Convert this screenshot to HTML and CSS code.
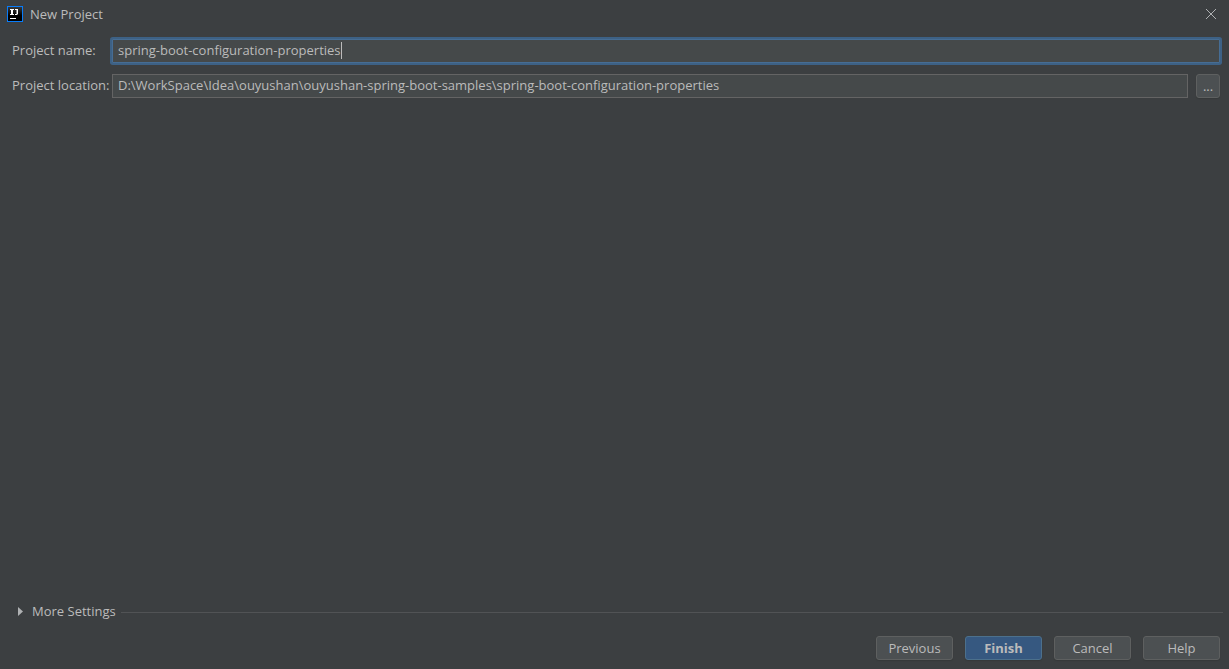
FILE: index.html
```html
<!DOCTYPE html>
<html lang="en">
<head>
  <meta charset="utf-8">
  <title>New Project</title>
  <link rel="stylesheet" href="styles.css">
</head>
<body>
  <!-- Title bar with logo and close button -->
  <header class="title-bar">
    <svg class="logo" viewBox="0 0 16 16" aria-hidden="true">
      <defs>
        <linearGradient id="logoFill" x1="0" y1="0" x2="0" y2="1">
          <stop offset="0" stop-color="#3a3a3a"/>
          <stop offset="0.6" stop-color="#000"/>
        </linearGradient>
      </defs>
      <rect width="16" height="16" fill="#087cfa"/>
      <rect x="1" y="1" width="14" height="14" fill="url(#logoFill)"/>
      <path d="M3 3h4v1H6v4h1v1H3V8h1V4H3zM8 3h3v5l-1 1H8V8h1.500V4H8z" fill="#fff"/>
      <path d="M3 12h6v1H3z" fill="#fff"/>
    </svg>
    <h1>New Project</h1>
    <button class="close" type="button" aria-label="Close">
      <svg viewBox="0 0 10 10" aria-hidden="true">
        <path d="M0 0L10 10M10 0L0 10" stroke="#afb1b3" fill="none"/>
      </svg>
    </button>
  </header>
  <form class="wizard">
    <!-- Project fields -->
    <div class="fields">
      <label for="projectName">Project name:</label>
      <div class="field">
        <input class="text-input active" id="projectName" type="text" value="spring-boot-configuration-properties" spellcheck="false">
        <span class="caret"></span>
      </div>
      <label for="projectLocation">Project location:</label>
      <div class="field">
        <input class="text-input" id="projectLocation" type="text" value="D:\WorkSpace\Idea\ouyushan\ouyushan-spring-boot-samples\spring-boot-configuration-properties" spellcheck="false">
        <button class="btn btn-browse" type="button" aria-label="Browse">...</button>
      </div>
    </div>
    <!-- Collapsed section -->
    <button class="more" type="button" aria-expanded="false">
      <span class="more-title">
        <svg viewBox="0 0 5 9" aria-hidden="true"><path d="M0 0v9l5-4.500z" fill="#afb1b3"/></svg>
        More Settings
      </span>
      <span class="line"></span>
    </button>
    <!-- Wizard buttons -->
    <footer class="actions">
      <button class="btn" type="button">Previous</button>
      <button class="btn btn-primary" type="button">Finish</button>
      <button class="btn" type="button">Cancel</button>
      <button class="btn" type="button">Help</button>
    </footer>
  </form>
</body>
</html>
```

FILE: styles.css
```css
* {
  box-sizing: border-box;
}
body {
  margin: 0;
  min-height: 100vh;
  display: flex;
  flex-direction: column;
  background: #3c3f41;
  color: #bbbbbb;
  font-family: 'Open Sans', sans-serif;
  font-size: 13px;
  line-height: 18px;
}
button, input {
  font: inherit;
  color: inherit;
}
.title-bar {
  display: flex;
  align-items: center;
  height: 28px;
  padding: 0 13px 0 7px;
}
.title-bar h1 {
  margin: 0 auto 0 7px;
  font-size: 13px;
  font-weight: 400;
}
.logo {
  width: 16px;
  height: 16px;
}
.close {
  display: flex;
  padding: 0;
  border: none;
  background: none;
}
.close svg {
  width: 10px;
  height: 10px;
}
.wizard {
  flex: 1;
  display: flex;
  flex-direction: column;
  padding: 11px 9px 9px 12px;
}
.fields {
  display: grid;
  grid-template-columns: 100px 1fr;
  row-gap: 11px;
  align-items: center;
}
.fields label {
  padding-bottom: 2px;
}
.field {
  position: relative;
  display: flex;
  gap: 8px;
}
.text-input {
  flex: 1;
  min-width: 0;
  height: 24px;
  padding: 0 5px 2px;
  border: 1px solid #646464;
  background: #45494a;
  outline: none;
}
.text-input.active {
  border-color: #466d94;
  box-shadow: 0 0 0 2px #3d6185; /* Focus ring */
  border-radius: 1px;
}
/* Text cursor at the end of the project name */
.caret {
  position: absolute;
  left: 229px;
  top: 3px;
  width: 1px;
  height: 17px;
  background: #bbbbbb;
}
.btn {
  width: 77px;
  height: 24px;
  padding: 0;
  border: 1px solid #5e6060;
  border-radius: 3px;
  background: #4c5052;
  box-shadow: 0 1px 1px #36393a;
}
.btn-browse {
  width: 24px;
}
.btn-primary {
  border-color: #4c708c;
  background: #365880;
  font-weight: 700;
}
.more {
  display: flex;
  align-items: center;
  margin: auto -3px 14px 0;
  padding: 0 0 0 6px;
  border: none;
  background: none;
}
.more-title {
  display: flex;
  align-items: center;
  gap: 9px;
  padding-bottom: 2px;
}
.more svg {
  width: 5px;
  height: 9px;
}
.line {
  flex: 1;
  height: 1px;
  margin-left: 5px;
  background: #515355;
}
.actions {
  display: flex;
  justify-content: flex-end;
  gap: 12px;
}
```
